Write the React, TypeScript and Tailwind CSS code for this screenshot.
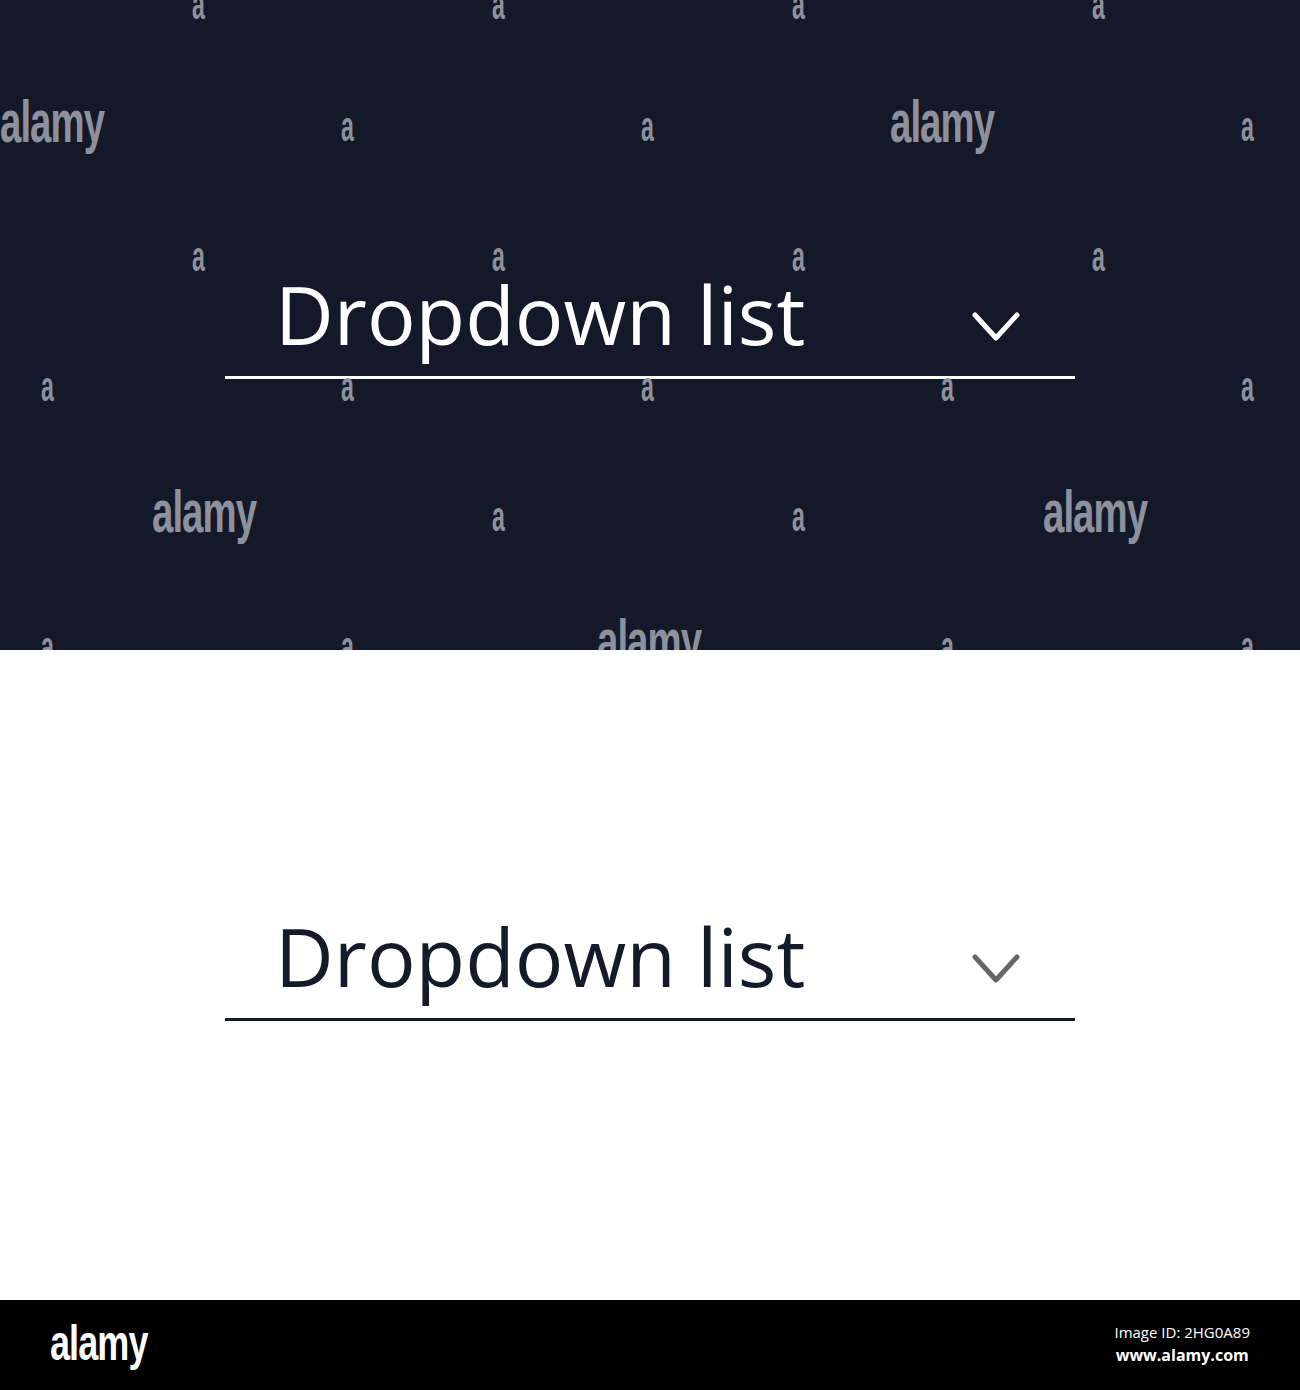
// stamp positions over the dark panel
const bigMarks = [
  { x: 0, y: 92 },
  { x: 890, y: 92 },
  { x: 152, y: 482 },
  { x: 1043, y: 482 },
  { x: 597, y: 611 },
]

const smallMarks = [
  { x: 192, y: -16 }, { x: 492, y: -16 }, { x: 792, y: -16 }, { x: 1092, y: -16 },
  { x: 341, y: 106 }, { x: 641, y: 106 }, { x: 1241, y: 106 },
  { x: 192, y: 236 }, { x: 492, y: 236 }, { x: 792, y: 236 }, { x: 1092, y: 236 },
  { x: 41, y: 366 }, { x: 341, y: 366 }, { x: 641, y: 366 }, { x: 941, y: 366 }, { x: 1241, y: 366 },
  { x: 492, y: 496 }, { x: 792, y: 496 },
  { x: 41, y: 626 }, { x: 341, y: 626 }, { x: 941, y: 626 }, { x: 1241, y: 626 },
]

function Dropdown({ dark }: { dark: boolean }) {
  return (
    <div
      className={
        "ml-[225px] w-[850px] flex items-end justify-between border-b-[3px] " +
        (dark ? "border-white" : "border-[#151a2b]")
      }
    >
      <span
        className={
          "pl-[50px] text-[81px] leading-none pb-[22px] " + (dark ? "text-white" : "text-[#151a2b]")
        }
        style={{ fontFamily: '"Open Sans", "Noto Sans", sans-serif' }}
      >
        Dropdown list
      </span>
      <svg width="48" height="36" viewBox="0 0 48 36" className="mr-[55px] mb-[30px]" fill="none">
        <polyline
          points="3,5 24,28 45,5"
          stroke={dark ? "#ffffff" : "#666666"}
          strokeWidth="5"
          strokeLinecap="round"
          strokeLinejoin="round"
        />
      </svg>
    </div>
  )
}

export default function App() {
  return (
    <div className="w-[1300px] flex flex-col" style={{ fontFamily: '"Liberation Sans", sans-serif' }}>
      <div className="relative h-[650px] bg-[#141929] overflow-hidden pt-[273px]">
        <Dropdown dark />
        {bigMarks.map((m, i) => (
          <span
            key={"b" + i}
            className="absolute text-[60px] font-bold leading-none text-[#8e919b] origin-top-left scale-x-[0.64] tracking-tight"
            style={{ left: m.x, top: m.y }}
          >
            alamy
          </span>
        ))}
        {smallMarks.map((m, i) => (
          <span
            key={"s" + i}
            className="absolute text-[42px] font-bold leading-none text-[#8e919b] origin-top-left scale-x-[0.55]"
            style={{ left: m.x, top: m.y }}
          >
            a
          </span>
        ))}
      </div>
      <div className="h-[650px] bg-white pt-[265px]">
        <Dropdown dark={false} />
      </div>
      <div className="h-[90px] bg-black flex items-center justify-between pl-[50px] pr-[50px]">
        <span className="text-[50px] font-bold leading-none text-white origin-left scale-x-[0.72] tracking-tight -mt-[4px]">
          alamy
        </span>
        <div
          className="flex flex-col items-center text-white -mt-[2px]"
          style={{ fontFamily: '"Open Sans", "Noto Sans", sans-serif' }}
        >
          <span className="text-[15px] leading-[22px]">Image ID: 2HG0A89</span>
          <span className="text-[16px] font-bold leading-[24px]">www.alamy.com</span>
        </div>
      </div>
    </div>
  )
}
